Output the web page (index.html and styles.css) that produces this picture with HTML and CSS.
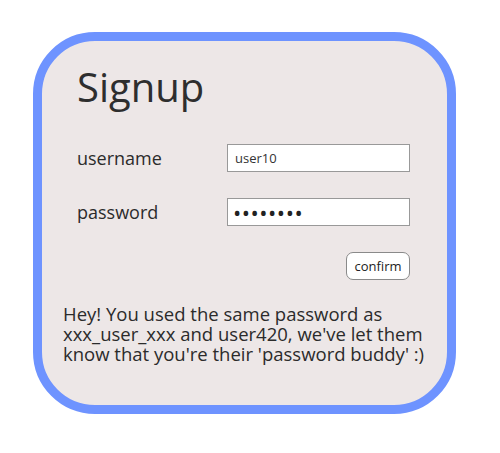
FILE: index.html
```html
<!DOCTYPE html>
<html>
<head>
<meta charset="utf-8">
<link rel="stylesheet" href="styles.css">
</head>
<body>
<div class="card">
  <div class="form">
    <h1 class="title">Signup</h1>
    <div class="row">
      <label class="label">username</label>
      <div class="input">user10</div>
    </div>
    <div class="row">
      <label class="label">password</label>
      <div class="input dots">••••••••</div>
    </div>
    <div class="actions">
      <button class="btn">confirm</button>
    </div>
  </div>
  <p class="message">Hey! You used the same password as xxx_user_xxx and user420, we've let them know that you're their 'password buddy' :)</p>
</div>
</body>
</html>
```

FILE: styles.css
```css
html, body {
  margin: 0;
  padding: 0;
  background: #ffffff;
}
body {
  padding: 32px 0 0 33px;
  font-family: "Open Sans", "Noto Sans", sans-serif;
  color: #2b2b2b;
}
.card {
  box-sizing: border-box;
  width: 423px;
  height: 382px;
  border: 9px solid #6e93ff;
  border-radius: 62px;
  background: #ede7e7;
}
.form {
  padding: 0 37px 0 35px;
}
.title {
  margin: 0;
  padding-top: 22px;
  height: 70px;
  font-size: 40px;
  font-weight: 400;
  line-height: 48px;
  color: #2e2e2e;
}
.row {
  display: flex;
  align-items: center;
  justify-content: space-between;
  margin-top: 11px;
  height: 28px;
}
.row + .row {
  margin-top: 26px;
}
.label {
  font-size: 18px;
}
.input {
  box-sizing: border-box;
  width: 183px;
  height: 28px;
  background: #fff;
  border: 1px solid #999;
  font-size: 13px;
  line-height: 26px;
  padding-left: 7px;
  color: #333;
}
.dots {
  font-size: 22px;
  letter-spacing: 0.5px;
  padding-left: 5px;
  color: #222;
}
.actions {
  display: flex;
  justify-content: flex-end;
  margin-top: 26px;
}
.btn {
  box-sizing: border-box;
  width: 64px;
  height: 28px;
  background: #fff;
  border: 1px solid #8a8a8a;
  border-radius: 7px;
  font-family: inherit;
  font-size: 13px;
  color: #222;
  padding: 0;
}
.message {
  margin: 24px 0 0 0;
  padding: 0 14px 0 21px;
  font-size: 18.5px;
  line-height: 20px;
  color: #2b2b2b;
}
```
